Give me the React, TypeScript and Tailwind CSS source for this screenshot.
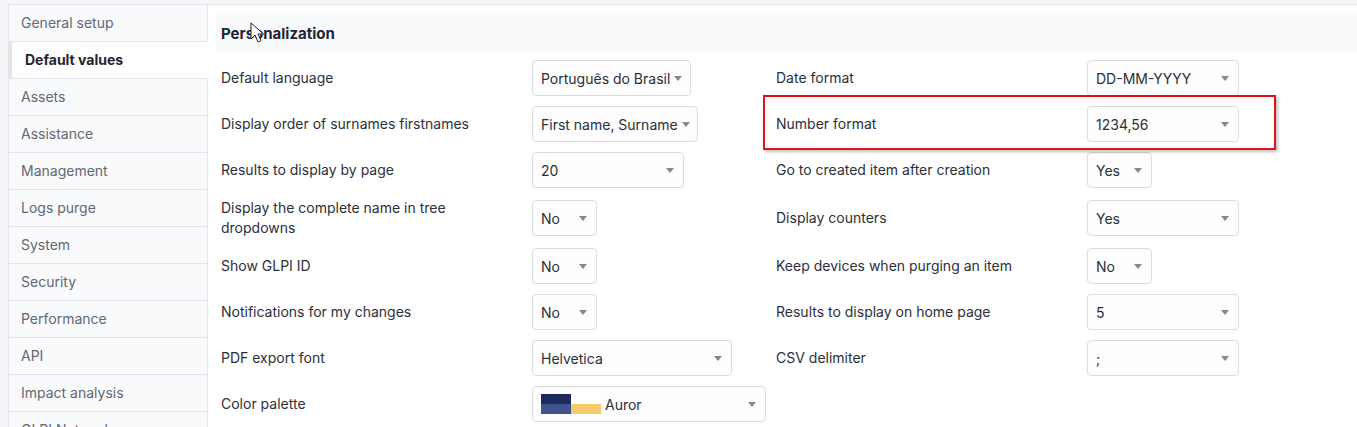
import React from "react";

const tabs = [
  "General setup",
  "Default values",
  "Assets",
  "Assistance",
  "Management",
  "Logs purge",
  "System",
  "Security",
  "Performance",
  "API",
  "Impact analysis",
  "GLPI Network",
];

function Select({ value, width, palette }: { value: string; width: string; palette?: boolean }) {
  return (
    <div
      className={`${width} h-[36px] flex items-center justify-between rounded-[4px] border border-[#dcdcdc] bg-[#fdfdfd] pl-[8px] pr-[9px] text-[14px] text-[#2b303a]`}
    >
      <div className="flex items-center gap-[4px] whitespace-nowrap">
        {palette && (
          <div className="flex">
            <div className="flex flex-col w-[30px] h-[20px]">
              <div className="h-[10px] bg-[#1f2a5c]" />
              <div className="h-[10px] bg-[#42528f]" />
            </div>
            <div className="flex flex-col w-[30px] h-[20px]">
              <div className="h-[10px] bg-white" />
              <div className="h-[10px] bg-[#f4ca6c]" />
            </div>
          </div>
        )}
        <span>{value}</span>
      </div>
      <svg width="8" height="5" viewBox="0 0 8 5" className="shrink-0 ml-[4px]">
        <path d="M0 0h8L4 5z" fill="#888" />
      </svg>
    </div>
  );
}

type Row = {
  label: string;
  select: { value: string; width: string; palette?: boolean };
  label2?: string;
  select2?: { value: string; width: string };
};

const rows: Row[] = [
  {
    label: "Default language",
    select: { value: "Português do Brasil", width: "w-[159px]" },
    label2: "Date format",
    select2: { value: "DD-MM-YYYY", width: "w-[152px]" },
  },
  {
    label: "Display order of surnames firstnames",
    select: { value: "First name, Surname", width: "w-[166px]" },
    label2: "Number format",
    select2: { value: "1234,56", width: "w-[152px]" },
  },
  {
    label: "Results to display by page",
    select: { value: "20", width: "w-[152px]" },
    label2: "Go to created item after creation",
    select2: { value: "Yes", width: "w-[65px]" },
  },
  {
    label: "Display the complete name in tree dropdowns",
    select: { value: "No", width: "w-[65px]" },
    label2: "Display counters",
    select2: { value: "Yes", width: "w-[152px]" },
  },
  {
    label: "Show GLPI ID",
    select: { value: "No", width: "w-[65px]" },
    label2: "Keep devices when purging an item",
    select2: { value: "No", width: "w-[65px]" },
  },
  {
    label: "Notifications for my changes",
    select: { value: "No", width: "w-[65px]" },
    label2: "Results to display on home page",
    select2: { value: "5", width: "w-[152px]" },
  },
  {
    label: "PDF export font",
    select: { value: "Helvetica", width: "w-[200px]" },
    label2: "CSV delimiter",
    select2: { value: ";", width: "w-[152px]" },
  },
  {
    label: "Color palette",
    select: { value: "Auror", width: "w-[234px]", palette: true },
  },
];

export default function App() {
  return (
    <div
      className="relative w-[1357px] h-[427px] overflow-hidden bg-[#f4f5f8] pt-[4px] pl-[8px] flex"
      style={{ fontFamily: "Inter, 'Liberation Sans', sans-serif" }}
    >
      {/* sidebar */}
      <div className="w-[200px] shrink-0 flex flex-col border-l border-t border-[#e3e5ea]">
        {tabs.map((t) =>
          t === "Default values" ? (
            <div
              key={t}
              className="h-[37px] shrink-0 flex items-center bg-white border-l-[4px] border-[#e4e4e4] border-b border-b-[#e3e5ea] pl-[13px] pb-px -ml-px text-[14px] font-bold text-[#1f2433]"
            >
              {t}
            </div>
          ) : (
            <div
              key={t}
              className="h-[37px] shrink-0 flex items-center bg-[#f9fafc] border-b border-r border-[#e3e5ea] pl-[12px] pb-px text-[14px] text-[#626874]"
            >
              {t}
            </div>
          )
        )}
      </div>

      {/* main */}
      <div className="flex-1 bg-white border-t border-[#e3e5ea] pt-[8px] pl-[8px]">
        <div className="h-[42px] flex items-center bg-[#f9fafb] pl-[5px] text-[15px] font-bold text-[#1f2433]">
          Personalization
        </div>
        <div className="pl-[5px] text-[14px] text-[#2b303a]">
          {rows.map((r) => (
            <div key={r.label} className="grid grid-cols-[311px_244px_311px_1fr] items-center py-[5px]">
              <div className="pr-[30px] leading-5">{r.label}</div>
              <div>
                <Select {...r.select} />
              </div>
              <div className="leading-5">{r.label2}</div>
              <div>{r.select2 && <Select {...r.select2} />}</div>
            </div>
          ))}
        </div>
      </div>

      {/* red highlight annotation */}
      <div className="absolute left-[763px] top-[95px] w-[513px] h-[55px] border-2 border-[#e3101b] shadow-[2px_2px_3px_rgba(0,0,0,0.25)]" />

      {/* mouse cursor */}
      <svg className="absolute left-[250px] top-[22px]" width="14" height="22" viewBox="0 0 14 22">
        <path
          d="M1 1v16l4-4 3 7 3-1.3-3-6.7h5.5z"
          fill="white"
          stroke="#222"
          strokeWidth="1"
          strokeLinejoin="round"
        />
      </svg>
    </div>
  );
}
